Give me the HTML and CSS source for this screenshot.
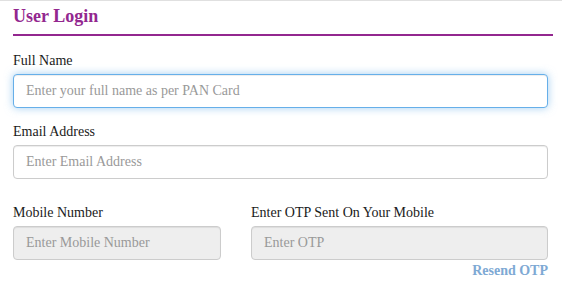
FILE: index.html
```html
<!DOCTYPE html>
<html>
<head>
<meta charset="utf-8">
<link rel="stylesheet" href="styles.css">
</head>
<body>
<div class="page">
  <div class="title-wrap">
    <h2 class="title">User Login</h2>
  </div>
  <form class="form">
    <div class="group">
      <label class="label">Full Name</label>
      <input class="control focus" type="text" placeholder="Enter your full name as per PAN Card">
    </div>
    <div class="group">
      <label class="label">Email Address</label>
      <input class="control" type="text" placeholder="Enter Email Address">
    </div>
    <div class="row">
      <div class="group">
        <label class="label">Mobile Number</label>
        <input class="control" type="text" placeholder="Enter Mobile Number" disabled>
      </div>
      <div class="group">
        <label class="label">Enter OTP Sent On Your Mobile</label>
        <input class="control" type="text" placeholder="Enter OTP" disabled>
        <div class="resend"><a class="resend-link">Resend OTP</a></div>
      </div>
    </div>
  </form>
</div>
</body>
</html>
```
FILE: styles.css
```css
html, body {
  margin: 0;
  padding: 0;
  background: #fff;
}
body {
  font-family: "Liberation Serif", "DejaVu Serif", serif;
  font-size: 14px;
  color: #1a1a1a;
}
.page {
  border-top: 1px solid #e0e0e0;
}
.title-wrap {
  padding: 0 9px 0 13px;
}
.title {
  margin: 0;
  padding: 4px 0 7px;
  font-family: "Liberation Serif", "DejaVu Serif", serif;
  font-size: 18px;
  line-height: 22px;
  font-weight: bold;
  color: #93278f;
  border-bottom: 2px solid #93278f;
}
.form {
  margin: 15px 14px 0 13px;
}
.group {
  display: flex;
  flex-direction: column;
}
.group + .group {
  margin-top: 14px;
}
.label {
  display: block;
  line-height: 20px;
  margin-bottom: 3px;
  color: #1a1a1a;
}
.control {
  box-sizing: border-box;
  height: 34px;
  width: 100%;
  padding: 6px 12px;
  font-family: "Liberation Serif", "DejaVu Serif", serif;
  font-size: 14px;
  color: #555;
  background: #fff;
  border: 1px solid #ccc;
  border-radius: 4px;
  outline: none;
  box-shadow: inset 0 1px 1px rgba(0,0,0,0.075);
}
.control::placeholder {
  color: #999;
  opacity: 1;
}
.control.focus {
  border-color: #66afe9;
  box-shadow: inset 0 1px 1px rgba(0,0,0,0.075), 0 0 8px rgba(102,175,233,0.6);
}
.control:disabled {
  background: #eee;
}
.row {
  display: grid;
  grid-template-columns: 208px 1fr;
  column-gap: 30px;
  margin-top: 24px;
}
.row .group + .group {
  margin-top: 0;
}
.resend {
  text-align: right;
  margin-top: 2px;
  line-height: 18px;
}
.resend-link {
  font-weight: bold;
  color: #7ea9d4;
  cursor: pointer;
}
```
